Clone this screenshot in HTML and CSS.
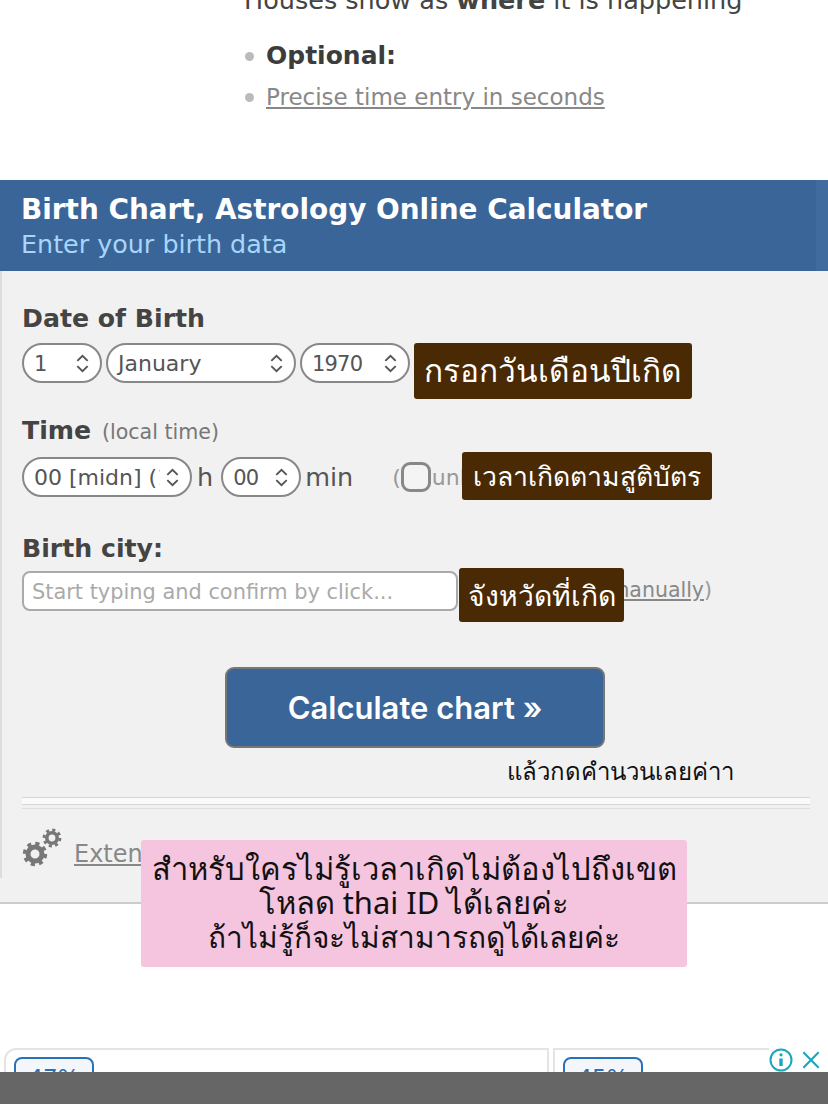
FILE: index.html
```html
<!DOCTYPE html>
<html lang="en">
<head>
<meta charset="utf-8">
<title>Birth Chart</title>
<link rel="stylesheet" href="styles.css">
</head>
<body>
<div class="page">
  <section class="intro">
    <p class="clipped">Houses show as <b>where</b> it is happening</p>
    <ul class="opts">
      <li class="opt-head">Optional:</li>
      <li><a class="opt-link">Precise time entry in seconds</a></li>
    </ul>
  </section>

  <header class="head">
    <h1>Birth Chart, Astrology Online Calculator</h1>
    <p>Enter your birth data</p>
  </header>

  <main class="panel">
    <h2 class="label l-date">Date of Birth</h2>
    <div class="row">
      <div class="sel w-day"><span class="num">1</span><svg class="chev" viewBox="0 0 16 22"><path d="M2 8l6-6 6 6M2 14l6 6 6-6"/></svg></div>
      <div class="sel w-month"><span>January</span><svg class="chev" viewBox="0 0 16 22"><path d="M2 8l6-6 6 6M2 14l6 6 6-6"/></svg></div>
      <div class="sel w-year"><span class="num">1970</span><svg class="chev" viewBox="0 0 16 22"><path d="M2 8l6-6 6 6M2 14l6 6 6-6"/></svg></div>
    </div>

    <h2 class="label l-time">Time <small>(local time)</small></h2>
    <div class="row">
      <div class="sel w-hour"><span class="clip">00 [midn] (12 am)</span><svg class="chev" viewBox="0 0 16 22"><path d="M2 8l6-6 6 6M2 14l6 6 6-6"/></svg></div>
      <span class="unit u-h">h</span>
      <div class="sel w-min"><span class="num">00</span><svg class="chev" viewBox="0 0 16 22"><path d="M2 8l6-6 6 6M2 14l6 6 6-6"/></svg></div>
      <span class="unit">min</span>
      <span class="unknown">(<i class="check"></i>unknown)</span>
    </div>

    <h2 class="label l-city">Birth city:</h2>
    <div class="row">
      <div class="city">Start typing and confirm by click...</div>
      <span class="manual">(or <a>enter data manually</a>)</span>
    </div>

    <div class="actions"><button class="calc" type="button">Calculate chart »</button></div>
    <div class="rule"></div>

    <div class="ext">
      <svg class="gears" viewBox="0 0 40 40">
        <circle class="teeth" cx="13" cy="26" r="10.5"/>
        <circle class="ring" cx="13" cy="26" r="7"/>
        <circle class="teeth small" cx="30" cy="10" r="8"/>
        <circle class="ring small" cx="30" cy="10" r="5.2"/>
      </svg>
      <a class="ext-link">Extended settings</a>
    </div>
  </main>

  <section class="ads">
    <div class="ad ad-a"><span class="badge">47%</span></div>
    <div class="ad ad-b"><span class="badge">45%</span></div>
  </section>

  <div class="cap cap-date">กรอกวันเดือนปีเกิด</div>
  <div class="cap cap-time">เวลาเกิดตามสูติบัตร</div>
  <div class="cap cap-city">จังหวัดที่เกิด</div>
  <div class="note">แล้วกดคำนวนเลยค่าา</div>
  <div class="pink">สำหรับใครไม่รู้เวลาเกิดไม่ต้องไปถึงเขต<br>โหลด thai ID ได้เลยค่ะ<br><span class="pl3">ถ้าไม่รู้ก็จะไม่สามารถดูได้เลยค่ะ</span></div>

  <div class="adicons">
    <svg class="ai" viewBox="0 0 24 24"><circle cx="12" cy="12" r="10.5"/><path class="ai-i" d="M12 10.5v7.5"/><circle class="ai-dot" cx="12" cy="6.8" r="1.6"/></svg>
    <svg class="ax" viewBox="0 0 20 20"><path d="M1.5 1.5l17 17M18.5 1.5l-17 17"/></svg>
  </div>
  <div class="bottombar"></div>
</div>
</body>
</html>
```
FILE: styles.css
```css
* { box-sizing: border-box; }
html, body { margin: 0; padding: 0; background: #fff; }
.page {
  position: relative;
  width: 828px;
  height: 1104px;
  overflow: hidden;
  font-family: "DejaVu Sans", Verdana, sans-serif;
  color: #444;
}
.intro { height: 180px; padding-left: 244px; overflow: hidden; }
.clipped { margin: -14px 0 0; font-size: 25.5px; line-height: 28px; color: #444; white-space: nowrap; }
.opts { list-style: none; margin: 28px 0 0; padding: 0; }
.opts li { position: relative; padding-left: 22px; font-size: 25px; line-height: 28px; margin-bottom: 13px; }
.opts li::before {
  content: ""; position: absolute; left: 1px; top: 10px;
  width: 9px; height: 9px; border-radius: 50%; background: #bbb;
}
.opt-head { font-weight: 700; color: #3c3c3c; }
.opt-link { color: #888; text-decoration: underline; font-size: 23px; }

.head {
  height: 91px; background: #3a6598; padding: 13px 0 0 21px;
  border-right: 12px solid #3f6b9f;
}
.head h1 { margin: 0; font-size: 27.9px; line-height: 34px; font-weight: 700; color: #fff; white-space: nowrap; }
.head p { margin: 0; font-size: 25.4px; line-height: 34px; color: #a8d5fb; }

.panel {
  height: 633px; background: #f1f1f1; padding: 31px 18px 0 22px;
  border-bottom: 2px solid #ccc;
  position: relative;
}
.panel::before {
  content: ""; position: absolute; left: 0; top: 0; width: 2px; height: 607px; background: #ddd;
}
.label { margin: 0; font-size: 25.2px; line-height: 34px; font-weight: 700; color: #444; }
.label small { font-size: 20.6px; font-weight: 400; color: #777; margin-left: 2px; }
.l-date { margin-bottom: 7px; }
.l-time { margin: 31px 0 8px; }
.l-city { margin: 35px 0 5px; }
.row { display: flex; align-items: center; height: 40px; white-space: nowrap; }

.sel {
  display: flex; align-items: center; justify-content: space-between;
  height: 40px; border: 2px solid #888; border-radius: 20px; background: #fff;
  padding: 0 10px 0 10px; font-size: 22px; color: #555; margin-right: 4px; flex: none;
}
.num { font-size: 21px; letter-spacing: -0.8px; margin-top: 1px; }
.w-day { width: 80px; }
.w-month { width: 190px; }
.w-year { width: 110px; margin-right: 0; }
.w-hour { width: 170px; margin-right: 5px; }
.w-min { width: 80px; margin-right: 4px; }
.clip { width: 126px; overflow: hidden; white-space: nowrap; }
.chev { width: 15px; height: 19px; flex: none; }
.chev path { fill: none; stroke: #555; stroke-width: 2.2; }
.unit { font-size: 25.5px; color: #555; }
.u-h { margin-right: 8px; }
.unknown { display: flex; align-items: center; margin-left: 39px; font-size: 22px; color: #999; }
.check {
  width: 30px; height: 30px; border: 3px solid #888; border-radius: 9px;
  background: #f4f4f4; margin: 0 1px 0 0;
}
.city {
  width: 436px; height: 40px; border: 2px solid #aaa; border-radius: 8px; background: #fff;
  padding-left: 8px; font-size: 20.9px; line-height: 38px; color: #aaa; flex: none;
}
.manual { margin-left: 2px; font-size: 20.5px; color: #999; margin-top: -3px; }
.manual a { text-decoration: underline; color: #888; }

.actions { display: flex; justify-content: center; margin: 56px 0 0 -2px; padding-left: 0; }
.calc {
  width: 380px; height: 81px; background: #3a6598; border: 2px solid #777; border-radius: 9px;
  color: #fff; font-family: Inter, Roboto, sans-serif; font-weight: 600; font-size: 31px;
}
.rule {
  height: 12px; margin-top: 49px;
  background:
    linear-gradient(#d6d6d6, #d6d6d6) 0 0 / 100% 1px no-repeat,
    linear-gradient(#fafafa, #fafafa) 0 1px / 100% 6px no-repeat,
    linear-gradient(#d6d6d6, #d6d6d6) 0 7px / 100% 1px no-repeat,
    linear-gradient(#dedede, #dedede) 0 11px / 100% 1px no-repeat;
}
.ext { display: flex; align-items: center; margin-top: 18px; }
.gears { width: 40px; height: 40px; flex: none; }
.teeth { fill: none; stroke: #777; stroke-width: 3.4; stroke-dasharray: 4.1 4.15; }
.teeth.small { stroke-width: 2.8; stroke-dasharray: 3.1 3.18; }
.ring { fill: none; stroke: #777; stroke-width: 5; }
.ring.small { stroke-width: 3.6; }
.ext-link { margin: 13px 0 0 12px; font-size: 24px; color: #888; text-decoration: underline; white-space: nowrap; }

.ads { display: flex; gap: 4px; margin: 144px 0 0 4px; }
.ad {
  height: 70px; border: 2px solid #e4e4e4; border-bottom: 0; border-radius: 12px 0 0 0;
  padding: 7px 0 0 8px;
}
.ad-a { width: 545px; }
.ad-b { width: 216px; border-right: 0; padding-left: 8px; border-radius: 0; }
.badge {
  display: block; width: 80px; height: 40px; border: 2px solid #2a72b8; border-radius: 8px;
  background: #f3f7fb; color: #2a72b8; font-size: 23px; line-height: 38px; text-align: center;
}

.cap, .note, .pink { position: absolute; font-family: "Noto Sans", "DejaVu Sans", sans-serif; white-space: nowrap; }
.cap {
  display: flex; align-items: center; justify-content: center;
  background: #4a2a05; color: #fff; border-radius: 3px;
}
.cap-date { left: 414px; top: 343px; width: 278px; height: 56px; font-size: 31.6px; }
.cap-time { left: 462px; top: 452px; width: 250px; height: 48px; font-size: 26.6px; }
.cap-city { left: 459px; top: 568px; width: 165px; height: 54px; font-size: 28.3px; }
.note { left: 507px; top: 753px; font-size: 24px; line-height: 36px; color: #111; }
.pink {
  left: 141px; top: 840px; width: 546px; height: 127px; padding-top: 11px;
  background: #f5c4df; border-radius: 3px; color: #111; text-align: center;
  font-size: 30.9px; line-height: 34px;
}
.pl3 { font-size: 29.8px; }
.adicons { position: absolute; left: 769px; top: 1048px; display: flex; gap: 9px; }
.ai { width: 24px; height: 24px; }
.ai > circle:first-child { fill: #fff; stroke: #1aa7bd; stroke-width: 2; }
.ai-i { stroke: #1aa7bd; stroke-width: 3.4; fill: none; }
.ai-dot { fill: #1aa7bd; }
.ax { width: 18px; height: 18px; margin-top: 3px; }
.ax path { stroke: #1aa7bd; stroke-width: 2.4; fill: none; }
.bottombar { position: absolute; left: 0; right: 0; bottom: 0; height: 32px; background: #666; }
```
